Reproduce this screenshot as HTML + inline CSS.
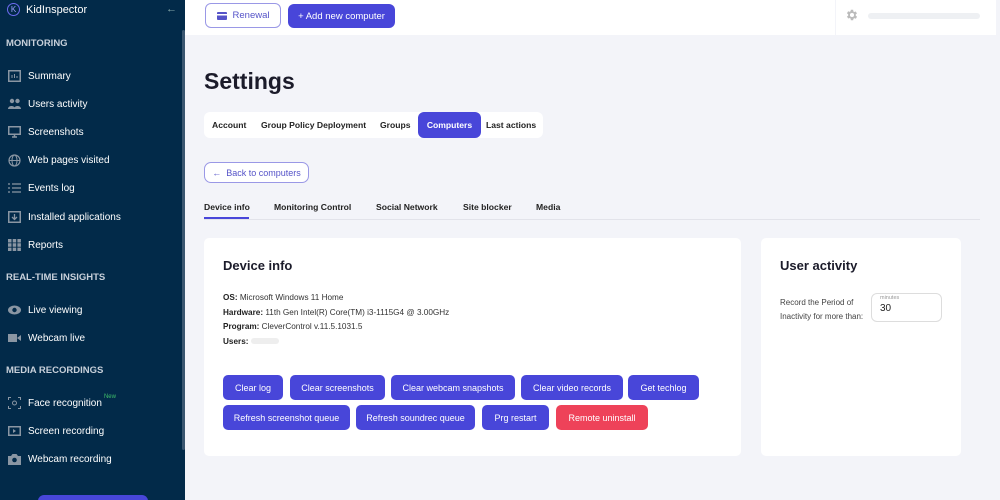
<!DOCTYPE html>
<html><head><meta charset="utf-8"><style>
*{box-sizing:border-box;margin:0;padding:0}
html,body{width:1000px;height:500px;overflow:hidden}
body{font-family:"Liberation Sans",sans-serif;background:#f3f4f9;position:relative}
.sb{position:absolute;left:0;top:0;width:185px;height:500px;background:#022a49;color:#fff;overflow:hidden}
.sb .scr{position:absolute;right:0;top:30px;width:3px;height:420px;background:#3a5670;border-radius:2px}
.logo{position:absolute;left:7px;top:3px;font-size:11px;display:flex;align-items:center;gap:6px}
.logo .c{width:13px;height:13px;border:1.5px solid #6d6bf0;border-radius:50%;font-size:8px;display:flex;align-items:center;justify-content:center;color:#9fa0ff}
.arrow{position:absolute;left:166px;top:3px;color:#8aa;font-size:11px}
.sec{position:absolute;left:6px;font-size:9.5px;font-weight:bold;color:#c8d0da}
.it{position:absolute;left:8px;font-size:10px;display:flex;align-items:center;gap:7px;color:#fff}
.top{position:absolute;left:185px;top:0;width:650px;height:35px;background:#fff}
.topr{position:absolute;left:836px;top:0;width:160px;height:35px;background:#fff}
.btn{position:absolute;border-radius:6px;font-size:9.5px;display:flex;align-items:center;justify-content:center}
.pb{background:#4846d9;color:#fff}
h1{position:absolute;left:204px;top:68px;font-size:23px;font-weight:bold;color:#1b1b2a}
.tabs{position:absolute;left:204px;top:112px;height:26px;background:#fff;border-radius:6px;width:339px}
.tab{position:absolute;top:0;height:26px;font-size:8.6px;font-weight:bold;color:#222;display:flex;align-items:center}
.sub{position:absolute;top:202px;font-size:8.6px;font-weight:bold;color:#222}
.card{position:absolute;background:#fff;border-radius:5px}
.ab{position:absolute;height:25px;background:#4846d9;color:#fff;font-size:9px;border-radius:5px;display:flex;align-items:center;justify-content:center}
.info{position:absolute;left:223px;font-size:8.2px;color:#333}
.info b{color:#222}
</style></head><body>
<div class="sb">
<div class="scr"></div>
<div class="logo"><div class="c">K</div>KidInspector</div>
<div class="arrow">←</div>
<div class="sec" style="top:38px">MONITORING</div>
<div class="it" style="top:70px"><svg width="13" height="12"><rect x=".75" y=".75" width="11.5" height="10.5" fill="none" stroke="#8a96a3" stroke-width="1.5"/><path d="M4 8V5M6.5 8V4M9 8V6" stroke="#8a96a3"/></svg>Summary</div>
<div class="it" style="top:98px"><svg width="13" height="12"><circle cx="4" cy="3" r="2.2" fill="#8a96a3"/><circle cx="9.5" cy="3" r="2.2" fill="#8a96a3"/><path d="M0 11c0-4 7-4 7 0zM6 11c0-4 7-4 7 0z" fill="#8a96a3"/></svg>Users activity</div>
<div class="it" style="top:126px"><svg width="13" height="12"><rect x=".75" y=".75" width="11.5" height="7.5" fill="none" stroke="#8a96a3" stroke-width="1.5"/><path d="M4 11h5M6.5 9v2" stroke="#8a96a3" stroke-width="1.5"/></svg>Screenshots</div>
<div class="it" style="top:154px"><svg width="13" height="13"><circle cx="6.5" cy="6.5" r="5.5" fill="none" stroke="#8a96a3" stroke-width="1.2"/><ellipse cx="6.5" cy="6.5" rx="2.5" ry="5.5" fill="none" stroke="#8a96a3"/><path d="M1 6.5h11" stroke="#8a96a3"/></svg>Web pages visited</div>
<div class="it" style="top:182px"><svg width="13" height="12"><path d="M0 2h2M4 2h9M0 6h2M4 6h9M0 10h2M4 10h9" stroke="#8a96a3" stroke-width="1.3"/></svg>Events log</div>
<div class="it" style="top:211px"><svg width="13" height="12"><rect x=".75" y=".75" width="11.5" height="10.5" fill="none" stroke="#8a96a3" stroke-width="1.5"/><path d="M6.5 3v5M4 6l2.5 2.5L9 6" stroke="#8a96a3" stroke-width="1.3" fill="none"/></svg>Installed applications</div>
<div class="it" style="top:239px"><svg width="13" height="12"><path d="M0 0h3.5v3.5H0zM4.7 0h3.5v3.5H4.7zM9.4 0h3.5v3.5H9.4zM0 4.3h3.5v3.5H0zM4.7 4.3h3.5v3.5H4.7zM9.4 4.3h3.5v3.5H9.4zM0 8.6h3.5v3.5H0zM4.7 8.6h3.5v3.5H4.7zM9.4 8.6h3.5v3.5H9.4z" fill="#8a96a3"/></svg>Reports</div>
<div class="sec" style="top:272px">REAL-TIME INSIGHTS</div>
<div class="it" style="top:304px"><svg width="13" height="12"><ellipse cx="6.5" cy="6" rx="6.5" ry="4.5" fill="#8a96a3"/><circle cx="6.5" cy="6" r="2.2" fill="#022a49"/></svg>Live viewing</div>
<div class="it" style="top:332px"><svg width="13" height="12"><rect x="0" y="2" width="9" height="8" fill="#8a96a3"/><path d="M9 6l4-3v6z" fill="#8a96a3"/></svg>Webcam live</div>
<div class="sec" style="top:365px">MEDIA RECORDINGS</div>
<div class="it" style="top:397px"><svg width="13" height="12"><path d="M.5 3V.5H3M10 .5h2.5V3M.5 9v2.5H3M10 11.5h2.5V9" stroke="#8a96a3" fill="none"/><circle cx="6.5" cy="6" r="2" fill="none" stroke="#8a96a3"/></svg>Face recognition<span style="font-size:6px;color:#3fbf6a;position:relative;top:-6px;left:-5px">New</span></div>
<div class="it" style="top:425px"><svg width="13" height="12"><rect x=".75" y="1.75" width="11.5" height="8.5" fill="none" stroke="#8a96a3" stroke-width="1.5"/><path d="M5 4l3 2-3 2z" fill="#8a96a3"/></svg>Screen recording</div>
<div class="it" style="top:453px"><svg width="13" height="12"><path d="M0 3h3l1.5-2h4L10 3h3v9H0z" fill="#8a96a3"/><circle cx="6.5" cy="7" r="2.3" fill="#022a49"/></svg>Webcam recording</div>
<div style="position:absolute;left:38px;top:495px;width:110px;height:12px;background:#4846d9;border-radius:8px"></div>
</div>
<div class="top"></div>
<div class="topr"><svg style="position:absolute;left:9px;top:8px" width="14" height="14" viewBox="0 0 24 24"><path fill="#bbb" d="M19.4 13a7.5 7.5 0 000-2l2.1-1.6-2-3.5-2.5 1a7 7 0 00-1.7-1L15 3h-4l-.4 2.6a7 7 0 00-1.7 1l-2.5-1-2 3.5L6.5 11a7.5 7.5 0 000 2l-2.1 1.6 2 3.5 2.5-1a7 7 0 001.7 1L11 21h4l.4-2.6a7 7 0 001.7-1l2.5 1 2-3.5zM13 15.5a3.5 3.5 0 110-7 3.5 3.5 0 010 7z" transform="translate(-1 0)"/></svg><div style="position:absolute;left:32px;top:13px;width:112px;height:6px;background:#eef0f3;border-radius:3px"></div></div>
<div class="btn" style="left:205px;top:3px;width:76px;height:25px;background:#fff;border:1px solid #9a98e6;color:#5553c8"><svg width="10" height="8" style="margin-right:6px"><rect width="10" height="8" rx="1" fill="#5553c8"/><rect y="2" width="10" height="1.5" fill="#fff"/></svg>Renewal</div>
<div class="btn pb" style="left:288px;top:4px;width:107px;height:24px">+ Add new computer</div>
<h1>Settings</h1>
<div class="tabs">
<div class="tab" style="left:8px">Account</div>
<div class="tab" style="left:57px">Group Policy Deployment</div>
<div class="tab" style="left:176px">Groups</div>
<div class="tab" style="left:214px;width:63px;background:#4846d9;color:#fff;border-radius:6px;justify-content:center">Computers</div>
<div class="tab" style="left:282px">Last actions</div>
</div>
<div class="btn" style="left:204px;top:162px;width:105px;height:21px;background:#fff;border:1px solid #9a98e6;color:#5553c8;font-size:9px;border-radius:7px">←&nbsp;&nbsp;Back to computers</div>
<div style="position:absolute;left:204px;top:219px;width:776px;height:1px;background:#e2e3ea"></div>
<div class="sub" style="left:204px">Device info</div>
<div style="position:absolute;left:204px;top:217px;width:45px;height:2px;background:#4846d9"></div>
<div class="sub" style="left:274px">Monitoring Control</div>
<div class="sub" style="left:376px">Social Network</div>
<div class="sub" style="left:463px">Site blocker</div>
<div class="sub" style="left:536px">Media</div>
<div class="card" style="left:204px;top:238px;width:537px;height:218px"></div>
<div class="card" style="left:761px;top:238px;width:200px;height:218px"></div>
<div style="position:absolute;left:223px;top:258px;font-size:13px;font-weight:bold;color:#1b1b2a">Device info</div>
<div class="info" style="top:293px"><b>OS:</b> Microsoft Windows 11 Home</div>
<div class="info" style="top:308px"><b>Hardware:</b> 11th Gen Intel(R) Core(TM) i3-1115G4 @ 3.00GHz</div>
<div class="info" style="top:322px"><b>Program:</b> CleverControl v.11.5.1031.5</div>
<div class="info" style="top:337px"><b>Users:</b> <span style="display:inline-block;width:28px;height:6px;background:#eee;border-radius:3px"></span></div>
<div class="ab" style="left:223px;top:375px;width:60px">Clear log</div>
<div class="ab" style="left:290px;top:375px;width:95px">Clear screenshots</div>
<div class="ab" style="left:391px;top:375px;width:124px">Clear webcam snapshots</div>
<div class="ab" style="left:521px;top:375px;width:102px">Clear video records</div>
<div class="ab" style="left:628px;top:375px;width:71px">Get techlog</div>
<div class="ab" style="left:223px;top:405px;width:127px">Refresh screenshot queue</div>
<div class="ab" style="left:356px;top:405px;width:119px">Refresh soundrec queue</div>
<div class="ab" style="left:482px;top:405px;width:67px">Prg restart</div>
<div class="ab" style="left:556px;top:405px;width:92px;background:#ee4259">Remote uninstall</div>
<div style="position:absolute;left:780px;top:258px;font-size:13px;font-weight:bold;color:#1b1b2a">User activity</div>
<div style="position:absolute;left:780px;top:296px;font-size:8px;color:#444;line-height:14px">Record the Period of<br>Inactivity for more than:</div>
<div style="position:absolute;left:871px;top:293px;width:71px;height:29px;border:1px solid #ddd;border-radius:6px;background:#fff"><div style="position:absolute;left:8px;top:1px;font-size:5.5px;color:#999">minutes</div><div style="position:absolute;left:8px;top:9px;font-size:10px;color:#222">30</div></div>
</body></html>
